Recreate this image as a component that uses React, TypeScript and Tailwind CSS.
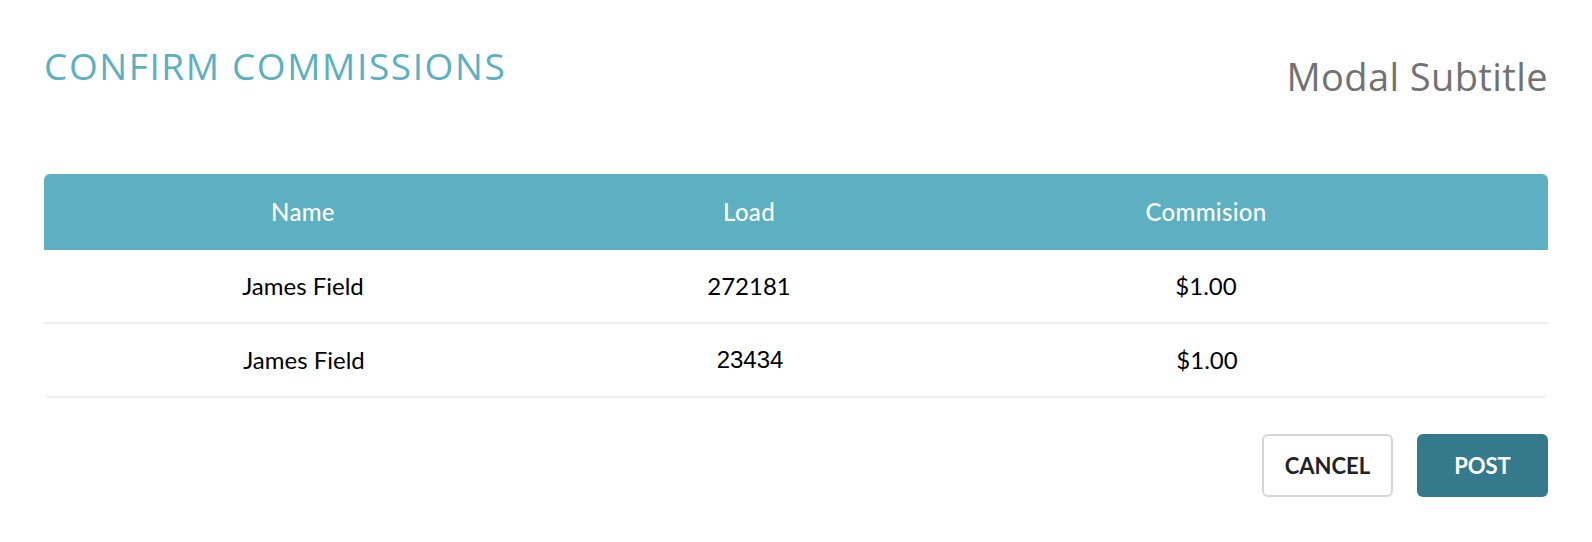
import React from "react";

const rows = [
  { name: "James Field", load: "272181", loadArial: false, commission: "$1.00" },
  { name: "James Field", load: "23434", loadArial: true, commission: "$1.00" },
];

export default function App() {
  return (
    <div className="w-[1592px] h-[542px] bg-white px-[44px] pt-[47px] font-['Lato',sans-serif]">
      <div className="flex items-start justify-between">
        <h1 className="font-['Open_Sans',sans-serif] text-[37px] leading-[37px] font-normal tracking-[1.6px] text-[#5bb0c2]">
          CONFIRM COMMISSIONS
        </h1>
        <div className="mt-[10px] font-['Open_Sans',sans-serif] text-[38px] leading-[38px] tracking-[0.4px] text-[#727272]">
          Modal Subtitle
        </div>
      </div>

      <div className="mt-[79px]">
        <div className="grid h-[76px] grid-cols-[518px_374px_540px_1fr] items-center rounded-t-[6px] bg-[#5cb0c2] text-[24px] font-medium tracking-[0.3px] text-white">
          <div className="text-center">Name</div>
          <div className="text-center">Load</div>
          <div className="text-center">Commision</div>
          <div />
        </div>
        {rows.map((r, i) => (
          <div
            key={i}
            className={
              i === rows.length - 1
                ? "grid h-[74px] grid-cols-[518px_374px_540px_1fr] items-center border-b-2 border-[#eeeeee] rounded-b-[3px] mx-[2px] text-[24px] text-black"
                : "grid h-[74px] grid-cols-[518px_374px_540px_1fr] items-center border-b-2 border-[#eeeeee] text-[24px] text-black"
            }
          >
            <div className={i === rows.length - 1 ? "text-center -ml-[2px]" : "text-center"}>{r.name}</div>
            <div
              className={
                r.loadArial
                  ? "text-center font-['Liberation_Sans',sans-serif] -ml-[2px]"
                  : "text-center"
              }
            >
              {r.load}
            </div>
            <div className={i === rows.length - 1 ? "text-center -ml-[2px]" : "text-center"}>{r.commission}</div>
            <div />
          </div>
        ))}
      </div>

      <div className="mt-[36px] flex justify-end gap-[24px]">
        <button className="h-[63px] w-[131px] rounded-[6px] border-2 border-[#d6d6d6] bg-white text-[22px] font-bold text-[#222222]">
          CANCEL
        </button>
        <button className="h-[63px] w-[131px] rounded-[6px] bg-[#347a8a] text-[22px] font-bold text-white">
          POST
        </button>
      </div>
    </div>
  );
}
